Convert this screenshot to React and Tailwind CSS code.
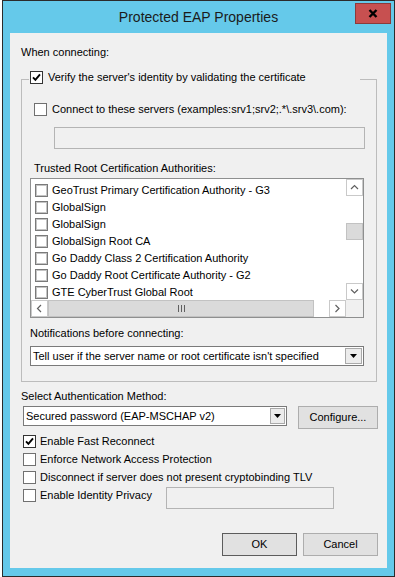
import React from "react";

const certs = [
  "GeoTrust Primary Certification Authority - G3",
  "GlobalSign",
  "GlobalSign",
  "GlobalSign Root CA",
  "Go Daddy Class 2 Certification Authority",
  "Go Daddy Root Certificate Authority - G2",
  "GTE CyberTrust Global Root",
];

function Box({ checked, list }) {
  return (
    <span
      className={`flex h-[13px] w-[13px] shrink-0 items-center justify-center border bg-white ${
        checked ? "border-[#333333]" : list ? "border-[#7a7a7a] shadow-[inset_0_0_0_1px_#c4c4c4]" : "border-[#707070]"
      }`}
    >
      {checked ? (
        <svg width="9" height="9" viewBox="0 0 9 9">
          <path d="M1 4.3 L3.4 6.8 L8 1.4" stroke="#000" strokeWidth="1.9" fill="none" />
        </svg>
      ) : null}
    </span>
  );
}

function Arrow() {
  return (
    <svg width="7" height="4" viewBox="0 0 7 4">
      <path d="M0 0 H7 L3.5 4 Z" fill="#000" />
    </svg>
  );
}

function Chevron({ dir }) {
  const d = {
    up: "M1 5 L4.5 1.5 L8 5",
    down: "M1 1.5 L4.5 5 L8 1.5",
    left: "M5 1 L1.5 4.5 L5 8",
    right: "M1.5 1 L5 4.5 L1.5 8",
  }[dir];
  const vertical = dir === "up" || dir === "down";
  return (
    <svg width={vertical ? 9 : 7} height={vertical ? 7 : 9} viewBox={vertical ? "0 0 9 7" : "0 0 7 9"}>
      <path d={d} stroke="#606060" strokeWidth="1.2" fill="none" />
    </svg>
  );
}

function Button({ children, primary }) {
  return (
    <div
      className={`flex h-[23px] w-[75px] items-center justify-center border bg-[#e1e1e1] ${
        primary ? "border-[#5c5c5c]" : "border-[#adadad]"
      }`}
    >
      {children}
    </div>
  );
}

function CheckRow({ checked, children }) {
  return (
    <div className="flex h-[18px] items-center whitespace-nowrap">
      <span className="ml-[2px]">
        <Box checked={checked} />
      </span>
      <span className="ml-[4px]">{children}</span>
    </div>
  );
}

export default function App() {
  return (
    <div className="min-h-[577px] bg-white font-['Liberation_Sans',Arial,sans-serif]">
      <div className="ml-[2px] flex h-[577px] w-[393px] flex-col border border-[#2b2b2b] bg-[#65c9ea]">
        {/* title bar */}
        <div className="relative flex h-[32px] shrink-0 items-center justify-center">
          <span className="text-[14px] text-[#1b1b1b]">Protected EAP Properties</span>
          <div className="absolute right-[3px] top-[2px] flex h-[21px] w-[36px] items-center justify-center border border-[#8c3a3a] bg-[#c75050]">
            <svg width="10" height="9" viewBox="0 0 10 9">
              <path d="M1.5 1 L8.5 8 M8.5 1 L1.5 8" stroke="#000" strokeWidth="2.4" />
            </svg>
          </div>
        </div>

        {/* client area */}
        <div className="mx-[7px] flex h-[535px] shrink-0 flex-col bg-[#f0f0f0] pl-[11px] pr-[9px] pt-[12px] text-[11px] text-black">
          <div className="h-[14px] leading-[14px]">When connecting:</div>

          <div className="mt-[20px] flex w-[356px] flex-col border border-[#bcbcbc] pb-[15px]">
            <div className="-mt-[9px] ml-[7px] flex h-[13px] w-[331px] items-center bg-[#f0f0f0] pl-[1px] whitespace-nowrap">
              <Box checked />
              <span className="ml-[5px]">Verify the server's identity by validating the certificate</span>
            </div>

            <div className="ml-[12px] mt-[19px] flex h-[13px] items-center whitespace-nowrap">
              <Box />
              <span className="ml-[5px]">Connect to these servers (examples:srv1;srv2;.*\.srv3\.com):</span>
            </div>

            <div className="ml-[32px] mt-[11px] h-[22px] w-[311px] border border-[#b4b4b4] bg-[#f0f0f0]" />

            <div className="ml-[12px] mt-[12px] h-[14px] leading-[14px]">Trusted Root Certification Authorities:</div>

            <div className="ml-[8px] mt-[3px] flex h-[140px] w-[334px] flex-col border border-[#8e8f8f] bg-white">
              <div className="flex h-[121px]">
                <div className="flex-1 overflow-hidden pt-[3px]">
                  {certs.map((c, i) => (
                    <div key={i} className="flex h-[17px] items-center whitespace-nowrap pl-[4px]">
                      <Box list />
                      <span className="ml-[4px]">{c}</span>
                    </div>
                  ))}
                </div>
                <div className="flex w-[17px] flex-col bg-white">
                  <div className="flex h-[17px] items-center justify-center border border-[#c9c9c9]">
                    <Chevron dir="up" />
                  </div>
                  <div className="flex-1">
                    <div className="mt-[27px] h-[17px] border border-[#c2c2c2] bg-[#dadada]" />
                  </div>
                  <div className="flex h-[17px] items-center justify-center border border-[#c9c9c9]">
                    <Chevron dir="down" />
                  </div>
                </div>
              </div>
              <div className="flex h-[17px]">
                <div className="flex flex-1 bg-white">
                  <div className="flex w-[17px] items-center justify-center border border-[#c9c9c9]">
                    <Chevron dir="left" />
                  </div>
                  <div className="flex w-[266px] items-center justify-center gap-[2px] border border-[#c2c2c2] bg-[#dadada]">
                    <span className="h-[7px] w-[1px] bg-[#606060]" />
                    <span className="h-[7px] w-[1px] bg-[#606060]" />
                    <span className="h-[7px] w-[1px] bg-[#606060]" />
                  </div>
                  <div className="flex-1" />
                  <div className="flex w-[17px] items-center justify-center border border-[#c9c9c9]">
                    <Chevron dir="right" />
                  </div>
                </div>
                <div className="w-[17px] bg-[#f0f0f0]" />
              </div>
            </div>

            <div className="ml-[8px] mt-[8px] h-[14px] leading-[14px]">Notifications before connecting:</div>

            <div className="ml-[8px] mt-[6px] flex h-[20px] w-[334px] items-center border border-[#7a7a7a] bg-white">
              <span className="flex-1 whitespace-nowrap pl-[2px]">Tell user if the server name or root certificate isn't specified</span>
              <div className="mr-[1px] flex h-[16px] w-[17px] items-center justify-center border border-[#a9a9a9] bg-[#ececec]">
                <Arrow />
              </div>
            </div>
          </div>

          <div className="mt-[7px] h-[14px] leading-[14px]">Select Authentication Method:</div>

          <div className="mt-[3px] flex items-start">
            <div className="ml-[2px] flex h-[20px] w-[264px] items-center border border-[#7a7a7a] bg-white">
              <span className="flex-1 whitespace-nowrap pl-[2px]">Secured password (EAP-MSCHAP v2)</span>
              <div className="mr-[1px] flex h-[16px] w-[15px] items-center justify-center border border-[#a9a9a9] bg-[#ececec]">
                <Arrow />
              </div>
            </div>
            <div className="ml-[11px] flex h-[23px] w-[80px] items-center justify-center border border-[#adadad] bg-[#e1e1e1]">
              Configure...
            </div>
          </div>

          <div className="mt-[3px] flex flex-col">
            <CheckRow checked>Enable Fast Reconnect</CheckRow>
            <CheckRow>Enforce Network Access Protection</CheckRow>
            <CheckRow>Disconnect if server does not present cryptobinding TLV</CheckRow>
            <div className="flex items-start">
              <div className="w-[145px]">
                <CheckRow>Enable Identity Privacy</CheckRow>
              </div>
              <div className="mt-[1px] h-[22px] w-[168px] border border-[#b4b4b4] bg-[#f0f0f0]" />
            </div>
          </div>

          <div className="mt-[24px] flex justify-end gap-[6px]">
            <Button primary>OK</Button>
            <Button>Cancel</Button>
          </div>
        </div>
      </div>
    </div>
  );
}
